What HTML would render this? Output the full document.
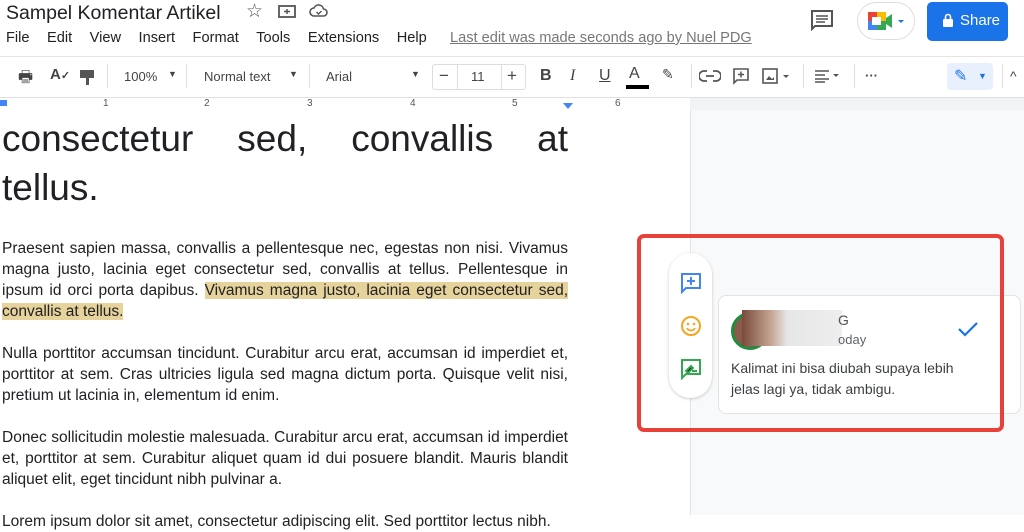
<!DOCTYPE html>
<html><head><meta charset="utf-8"><style>
*{margin:0;padding:0;box-sizing:border-box}
body{width:1024px;height:515px;overflow:hidden;background:#fff;font-family:"Liberation Sans",Arial,sans-serif;position:relative;color:#202124}
.abs{position:absolute}
.menu span{margin-right:17.5px}
.tb{font-size:13px;color:#444}
.doc p{font-size:15.5px;line-height:21px;text-align:justify;color:#202124}
.hl{background:#e6d39c}
</style></head><body>
<div class="abs" style="left:6px;top:2px;font-size:19.5px;color:#202124">Sampel Komentar Artikel</div>
<div class="abs" style="left:246px;top:0px;font-size:19px;color:#555">☆</div>
<svg class="abs" style="left:278px;top:4px" width="18" height="14"><rect x="1" y="2" width="16" height="11" fill="none" stroke="#555" stroke-width="1.8"/><path d="M6 7.5h6M9 5v5" stroke="#555" stroke-width="1.5"/></svg>
<svg class="abs" style="left:309px;top:3px" width="20" height="16"><path d="M5 13a4 4 0 0 1 0-8 5 5 0 0 1 9.5 1 3.5 3.5 0 0 1 0 7z" fill="none" stroke="#555" stroke-width="1.6"/><path d="M7.5 9l2 2 3-3" stroke="#555" stroke-width="1.4" fill="none"/></svg>
<div class="abs menu" style="left:6px;top:30px;font-size:14.6px;color:#202124"><span>File</span><span>Edit</span><span>View</span><span>Insert</span><span>Format</span><span>Tools</span><span>Extensions</span><span>Help</span></div>
<div class="abs" style="left:450px;top:30px;font-size:14.6px;color:#777;text-decoration:underline">Last edit was made seconds ago by Nuel PDG</div>
<svg class="abs" style="left:810px;top:9px" width="24" height="22"><path d="M2 2h20v15H5l-3 3z" fill="none" stroke="#555" stroke-width="2"/><path d="M6 7h12M6 10h12M6 13h9" stroke="#555" stroke-width="1.6"/></svg>
<div class="abs" style="left:857px;top:2px;width:58px;height:38px;border:1px solid #ddd;border-radius:20px;background:#fff"></div>
<svg class="abs" style="left:867px;top:10px" width="40" height="22"><rect x="1" y="2" width="9" height="9" fill="#ea4335"/><rect x="10" y="2" width="9" height="9" fill="#fbbc04"/><rect x="1" y="11" width="9" height="9" fill="#4285f4"/><rect x="10" y="11" width="9" height="9" fill="#34a853"/><rect x="5" y="7" width="9" height="8" fill="#fff"/><path d="M19 8l6-4v14l-6-4z" fill="#34a853"/><path d="M31 10l3 3 3-3z" fill="#1a73e8"/></svg>
<div class="abs" style="left:927px;top:2px;width:81px;height:39px;background:#1a73e8;border-radius:5px;color:#fff;font-size:15px;padding:10px 0 0 33px">Share</div>
<svg class="abs" style="left:942px;top:13px" width="12" height="14"><rect x="1" y="6" width="10" height="8" rx="1" fill="#fff"/><path d="M3.5 6V4a2.5 2.5 0 0 1 5 0v2" stroke="#fff" stroke-width="1.6" fill="none"/></svg>
<div class="abs" style="left:0;top:56px;width:1024px;height:1px;background:#e5e5e5"></div>
<div class="abs tb" style="left:18px;top:66px;font-size:16px">🖶</div>
<div class="abs tb" style="left:50px;top:66px;font-size:15px;font-weight:bold">A<span style="font-size:11px">✓</span></div>
<div class="abs" style="left:80px;top:70px;width:14px;height:8px;background:#555"></div><div class="abs" style="left:86px;top:77px;width:3px;height:8px;background:#555"></div>
<div class="abs" style="left:107px;top:64px;width:1px;height:24px;background:#ddd"></div>
<div class="abs tb" style="left:124px;top:69px">100%</div><div class="abs tb" style="left:168px;top:69px;font-size:9px">▼</div>
<div class="abs" style="left:186px;top:64px;width:1px;height:24px;background:#ddd"></div>
<div class="abs tb" style="left:204px;top:69px">Normal text</div><div class="abs tb" style="left:289px;top:69px;font-size:9px">▼</div>
<div class="abs" style="left:309px;top:64px;width:1px;height:24px;background:#ddd"></div>
<div class="abs tb" style="left:326px;top:69px">Arial</div><div class="abs tb" style="left:411px;top:69px;font-size:9px">▼</div>
<div class="abs" style="left:432px;top:64px;width:94px;height:26px;border:1px solid #ddd;border-radius:3px"></div>
<div class="abs" style="left:457px;top:64px;width:1px;height:26px;background:#ddd"></div><div class="abs" style="left:501px;top:64px;width:1px;height:26px;background:#ddd"></div>
<div class="abs tb" style="left:439px;top:66px;font-size:17px">−</div><div class="abs tb" style="left:471px;top:69px">11</div><div class="abs tb" style="left:507px;top:66px;font-size:17px">+</div>
<div class="abs" style="left:540px;top:67px;font-size:16px;font-weight:bold;color:#444">B</div>
<div class="abs" style="left:570px;top:67px;font-size:16px;font-style:italic;color:#444;font-family:'Liberation Serif'">I</div>
<div class="abs" style="left:599px;top:67px;font-size:16px;text-decoration:underline;color:#444">U</div>
<div class="abs" style="left:629px;top:65px;font-size:16px;color:#444">A</div><div class="abs" style="left:626px;top:85px;width:23px;height:4px;background:#000"></div>
<div class="abs" style="left:662px;top:66px;font-size:14px;color:#444">✎</div>
<div class="abs" style="left:691px;top:64px;width:1px;height:24px;background:#ddd"></div>
<svg class="abs" style="left:699px;top:70px" width="22" height="12"><path d="M8 1H5a4.5 4.5 0 0 0 0 10h3M14 1h3a4.5 4.5 0 0 1 0 10h-3M7 6h8" fill="none" stroke="#555" stroke-width="1.8"/></svg>
<svg class="abs" style="left:732px;top:67px" width="18" height="18"><path d="M2 2h14v11H5l-3 3z" fill="none" stroke="#555" stroke-width="1.6"/><path d="M6 7.5h6M9 4.5v6" stroke="#555" stroke-width="1.5"/></svg>
<svg class="abs" style="left:762px;top:68px" width="30" height="16"><rect x="1" y="1" width="14" height="14" fill="none" stroke="#555" stroke-width="1.6"/><path d="M4 12l3-4 3 3 2-2v3z" fill="#555"/><path d="M21 7l3 3 3-3z" fill="#555"/></svg>
<div class="abs" style="left:803px;top:64px;width:1px;height:24px;background:#ddd"></div>
<svg class="abs" style="left:814px;top:69px" width="30" height="14"><path d="M1 2h14M1 6h10M1 10h14M1 13h10" stroke="#555" stroke-width="1.6"/><path d="M19 5l3 3 3-3z" fill="#555"/></svg>
<div class="abs" style="left:854px;top:64px;width:1px;height:24px;background:#ddd"></div>
<div class="abs tb" style="left:865px;top:68px;font-weight:bold">···</div>
<div class="abs" style="left:947px;top:63px;width:46px;height:27px;background:#e8f0fe;border-radius:4px"></div>
<div class="abs" style="left:954px;top:66px;font-size:16px;color:#1a73e8">✎</div><div class="abs" style="left:978px;top:71px;font-size:9px;color:#1a73e8">▼</div>
<div class="abs" style="left:1002px;top:64px;width:1px;height:24px;background:#ddd"></div>
<div class="abs" style="left:1010px;top:68px;font-size:14px;color:#444">^</div>
<div class="abs" style="left:0;top:97px;width:1024px;height:13px;background:#f1f3f4;border-top:1px solid #e0e0e0"></div>
<div class="abs" style="left:0;top:98px;width:690px;height:12px;background:#fff"></div>
<div class="abs" style="left:0;top:100px;width:7px;height:6px;background:#4285f4"></div>
<div class="abs" style="left:563px;top:103px;width:0;height:0;border-left:5px solid transparent;border-right:5px solid transparent;border-top:6px solid #4285f4"></div>
<div class="abs" style="left:103px;top:98px;font-size:10px;color:#555">1</div>
<div class="abs" style="left:204px;top:98px;font-size:10px;color:#555">2</div>
<div class="abs" style="left:307px;top:98px;font-size:10px;color:#555">3</div>
<div class="abs" style="left:410px;top:98px;font-size:10px;color:#555">4</div>
<div class="abs" style="left:512px;top:98px;font-size:10px;color:#555">5</div>
<div class="abs" style="left:615px;top:98px;font-size:10px;color:#555">6</div>
<div class="abs" style="left:690px;top:110px;width:334px;height:405px;background:#f8f9fa;border-left:1px solid #e3e3e3"></div>
<div class="abs doc" style="left:2px;top:114px;width:566px">
<div style="font-size:37px;line-height:49px;text-align:justify;text-align-last:justify">consectetur sed, convallis at</div>
<div style="font-size:37px;line-height:49px">tellus.</div>
<p style="margin-top:26px">Praesent sapien massa, convallis a pellentesque nec, egestas non nisi. Vivamus magna justo, lacinia eget consectetur sed, convallis at tellus. Pellentesque in ipsum id orci porta dapibus. <span class="hl">Vivamus magna justo, lacinia eget consectetur sed, convallis at tellus.</span></p>
<p style="margin-top:21px">Nulla porttitor accumsan tincidunt. Curabitur arcu erat, accumsan id imperdiet et, porttitor at sem. Cras ultricies ligula sed magna dictum porta. Quisque velit nisi, pretium ut lacinia in, elementum id enim.</p>
<p style="margin-top:21px">Donec sollicitudin molestie malesuada. Curabitur arcu erat, accumsan id imperdiet et, porttitor at sem. Curabitur aliquet quam id dui posuere blandit. Mauris blandit aliquet elit, eget tincidunt nibh pulvinar a.</p>
<p style="margin-top:21px">Lorem ipsum dolor sit amet, consectetur adipiscing elit. Sed porttitor lectus nibh.</p>
</div>
<div class="abs" style="left:669px;top:253px;width:43px;height:145px;background:#fff;border-radius:22px;box-shadow:0 1px 3px rgba(0,0,0,.2)"></div>
<svg class="abs" style="left:680px;top:272px" width="22" height="22"><path d="M2 2h18v14H6l-4 4z" fill="none" stroke="#4285f4" stroke-width="2"/><path d="M7 9h8M11 5v8" stroke="#4285f4" stroke-width="2"/></svg>
<svg class="abs" style="left:680px;top:315px" width="22" height="22"><circle cx="11" cy="11" r="9" fill="none" stroke="#f4a522" stroke-width="2"/><circle cx="8" cy="9" r="1.3" fill="#f4a522"/><circle cx="14" cy="9" r="1.3" fill="#f4a522"/><path d="M7 13a4.5 4.5 0 0 0 8 0" fill="none" stroke="#f4a522" stroke-width="1.8"/></svg>
<svg class="abs" style="left:680px;top:358px" width="22" height="22"><path d="M2 2h18v14H6l-4 4z" fill="none" stroke="#34a853" stroke-width="2"/><path d="M6 13l5-5 2 2-5 5zM12 13h5" stroke="#34a853" stroke-width="2"/></svg>
<div class="abs" style="left:718px;top:295px;width:303px;height:119px;background:#fff;border:1px solid #e3e3e3;border-radius:8px"></div>
<div class="abs" style="left:731px;top:312px;width:38px;height:38px;border-radius:50%;border:3px solid #1e8e3e;background:#8a5a4a"></div>
<div class="abs" style="left:742px;top:310px;width:100px;height:36px;background:linear-gradient(90deg,#7a4a3a,#c8a898 30%,#e6e6e6 45%,#eee)"></div>
<div class="abs" style="left:838px;top:312px;font-size:14px;color:#555">G</div>
<div class="abs" style="left:838px;top:332px;font-size:13px;color:#5f6368">oday</div>
<svg class="abs" style="left:957px;top:320px" width="22" height="18"><path d="M2 9l6 6L20 3" fill="none" stroke="#1a73e8" stroke-width="2.2"/></svg>
<div class="abs" style="left:731px;top:358px;font-size:14px;line-height:21px;color:#3c4043">Kalimat ini bisa diubah supaya lebih<br>jelas lagi ya, tidak ambigu.</div>
<div class="abs" style="left:637px;top:234px;width:367px;height:198px;border:4px solid #e8413a;border-radius:7px"></div>
</body></html>
